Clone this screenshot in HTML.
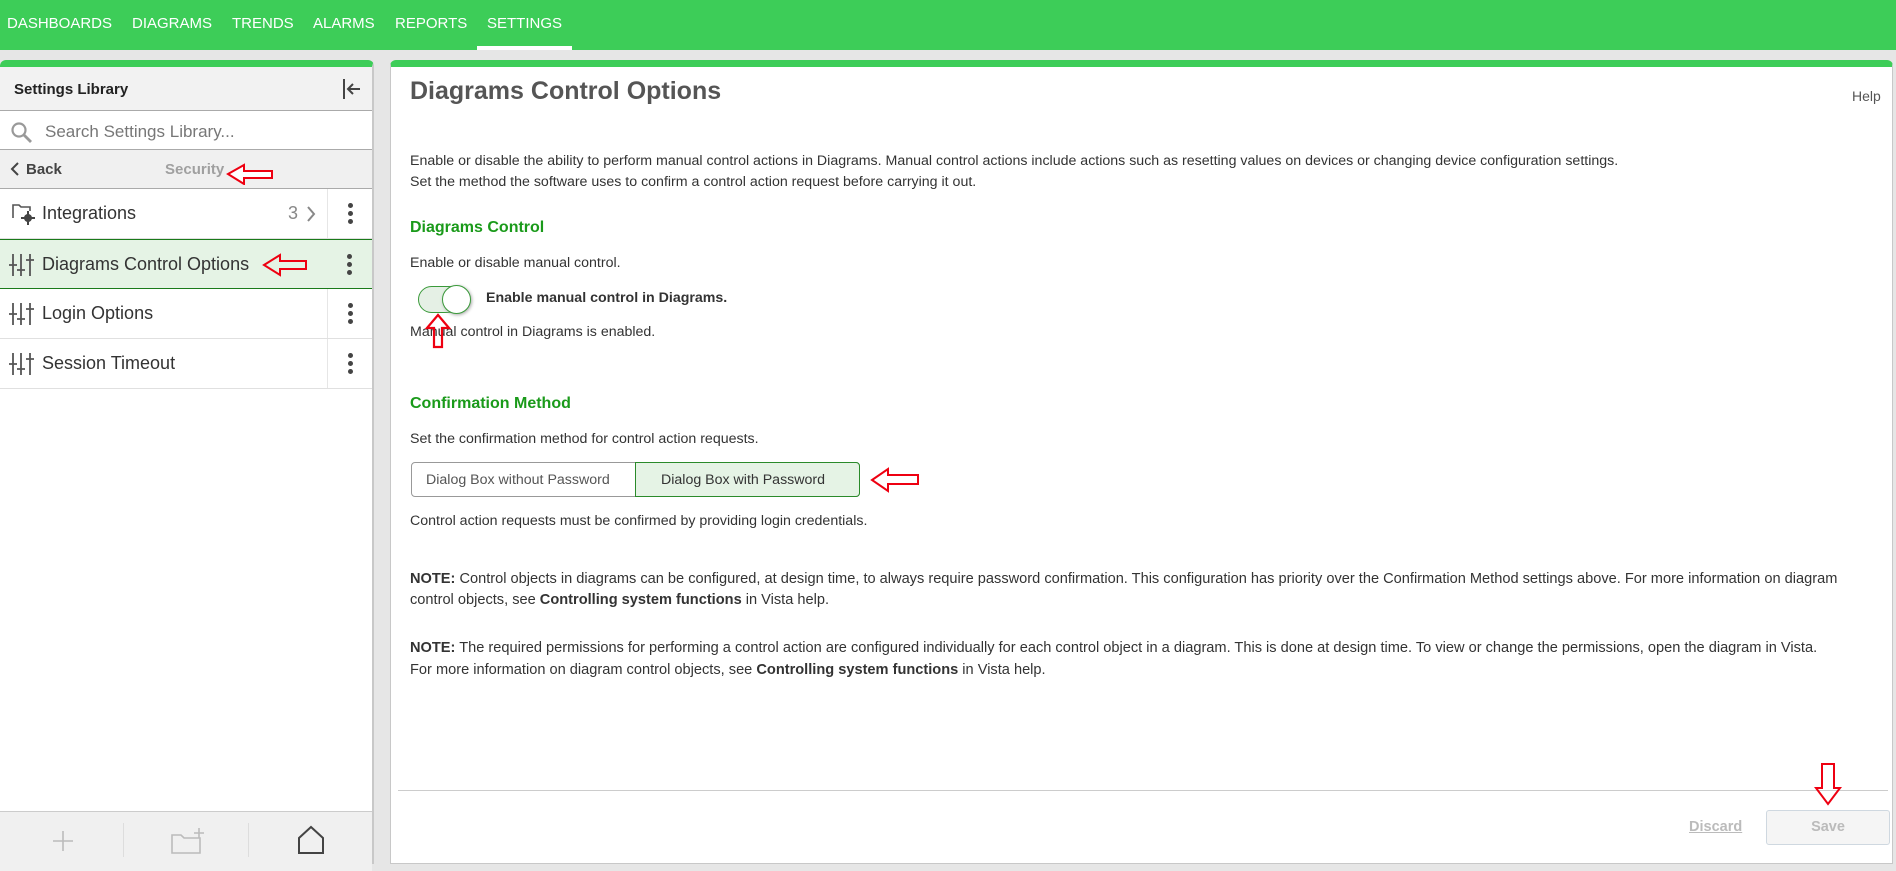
<!DOCTYPE html>
<html><head><meta charset="utf-8"><style>
*{box-sizing:border-box;margin:0;padding:0}
body{width:1896px;height:864px;background:#e6e6e6;font-family:"Liberation Sans",sans-serif;position:relative;overflow:hidden;color:#333}
.nav{position:absolute;left:0;top:0;width:1896px;height:50px;background:#3dcd58}
.nav span{position:absolute;top:15px;color:#fff;font-size:15px}
.a{position:absolute}
.left{position:absolute;left:0;top:60px;width:374px;height:804px;background:#fff;border-right:2px solid #c8c8c8;border-top:7px solid #3dcd58;border-radius:6px 6px 0 0}
.right{position:absolute;left:390px;top:60px;width:1503px;height:804px;background:#fff;border:1px solid #c8c8c8;border-top:7px solid #3dcd58;border-radius:6px 6px 0 0}
.item{position:absolute;left:0;width:372px;height:50px;border-bottom:1px solid #e0e0e0;font-size:18px;color:#333}
.item .t{position:absolute;left:42px;top:14px}
.item .dots{position:absolute;left:327px;top:0;width:45px;height:49px;border-left:1px solid #e6e6e6}
.item .dots i{position:absolute;left:20px;width:5px;height:5px;border-radius:50%;background:#444}
p.tx{position:absolute;left:410px;font-size:14.2px;color:#333;white-space:nowrap}
p.nt{font-size:14.6px}
h3{position:absolute;left:410px;font-size:16px;color:#1a9a1a;font-weight:bold}
</style></head><body>
<div class="nav">
<span style="left:7px">DASHBOARDS</span><span style="left:132px">DIAGRAMS</span><span style="left:232px">TRENDS</span><span style="left:313px">ALARMS</span><span style="left:395px">REPORTS</span><span style="left:487px">SETTINGS</span>
<div class="a" style="left:477px;top:46px;width:95px;height:4px;background:#fff"></div>
</div>

<div class="left">
<div class="a" style="left:0;top:0;width:372px;height:44px;background:#f2f2f2;border-bottom:1px solid #aaa"></div>
<div class="a" style="left:14px;top:14px;font-size:15px;font-weight:bold;color:#222">Settings Library</div>
<svg class="a" style="left:340px;top:10px" width="24" height="24" viewBox="0 0 24 24"><path d="M4 2v20M20 12H8M13 7l-5 5 5 5" stroke="#444" stroke-width="2" fill="none"/></svg>
<svg class="a" style="left:10px;top:54px" width="24" height="24" viewBox="0 0 24 24"><circle cx="9" cy="9" r="6.5" stroke="#999" stroke-width="2.2" fill="none"/><path d="M14 14l7 7" stroke="#999" stroke-width="2.8"/></svg>
<div class="a" style="left:45px;top:55px;font-size:17px;color:#777">Search Settings Library...</div>
<div class="a" style="left:0;top:82px;width:372px;height:40px;background:#f0f0f0;border-top:1px solid #aaa;border-bottom:1px solid #aaa"></div>
<svg class="a" style="left:9px;top:94px" width="12" height="16"><path d="M9 2L3 8l6 6" stroke="#444" stroke-width="2" fill="none"/></svg>
<div class="a" style="left:26px;top:94px;font-size:15px;font-weight:bold;color:#444">Back</div>
<div class="a" style="left:165px;top:94px;font-size:15px;font-weight:bold;color:#a0a0a0">Security</div>
<svg class="a" style="left:226px;top:96px" width="48" height="22"><path d="M2 11L18 2v6h28v7H18v6z" stroke="#e01" stroke-width="2" fill="#fff"/></svg>

<div class="item" style="top:122px"><svg class="a" style="left:11px;top:13px" width="26" height="24" viewBox="0 0 26 24"><path d="M2 16V3h6l2 2h9v4" stroke="#555" stroke-width="1.6" fill="none"/><circle cx="17" cy="16" r="4" fill="#444"/><circle cx="17" cy="16" r="1.5" fill="#fff"/><path d="M17 9v14M10 16h14" stroke="#444" stroke-width="2"/></svg><span class="t">Integrations</span><span class="a" style="left:288px;top:14px;color:#888;font-size:18px">3</span><svg class="a" style="left:305px;top:16px" width="12" height="18"><path d="M3 2l6 7-6 7" stroke="#888" stroke-width="2" fill="none"/></svg><div class="dots"><i style="top:14px"></i><i style="top:22px"></i><i style="top:30px"></i></div></div>
<div class="item" style="top:172px;background:#e5f3e5;border-top:1px solid #1a7a1a;border-bottom:1px solid #1a7a1a"><svg class="a" style="left:8px;top:13px" width="28" height="24" viewBox="0 0 28 24"><path d="M5 1v22M13 1v22M22 1v22M1 12h8M9 17h8M18 7h8" stroke="#555" stroke-width="1.8" fill="none"/></svg><span class="t">Diagrams Control Options</span><svg class="a" style="left:262px;top:13px" width="46" height="24"><path d="M2 12L18 2v6h26v8H18v6z" stroke="#e01" stroke-width="2" fill="none"/></svg><div class="dots" style="border-left:none"><i style="top:14px"></i><i style="top:22px"></i><i style="top:30px"></i></div></div>
<div class="item" style="top:222px"><svg class="a" style="left:8px;top:13px" width="28" height="24" viewBox="0 0 28 24"><path d="M5 1v22M13 1v22M22 1v22M1 12h8M9 17h8M18 7h8" stroke="#555" stroke-width="1.8" fill="none"/></svg><span class="t">Login Options</span><div class="dots"><i style="top:14px"></i><i style="top:22px"></i><i style="top:30px"></i></div></div>
<div class="item" style="top:272px"><svg class="a" style="left:8px;top:13px" width="28" height="24" viewBox="0 0 28 24"><path d="M5 1v22M13 1v22M22 1v22M1 12h8M9 17h8M18 7h8" stroke="#555" stroke-width="1.8" fill="none"/></svg><span class="t">Session Timeout</span><div class="dots"><i style="top:14px"></i><i style="top:22px"></i><i style="top:30px"></i></div></div>

<div class="a" style="left:0;top:744px;width:372px;height:60px;background:#f0f0f0;border-top:1px solid #ccc"></div>
<div class="a" style="left:123px;top:756px;width:1px;height:34px;background:#ddd"></div>
<div class="a" style="left:248px;top:756px;width:1px;height:34px;background:#ddd"></div>
<svg class="a" style="left:52px;top:763px" width="22" height="22"><path d="M11 1v20M1 11h20" stroke="#bbb" stroke-width="1.6"/></svg>
<svg class="a" style="left:170px;top:760px" width="38" height="28"><path d="M2 26V8h9l3 3h16v15z" stroke="#bbb" stroke-width="1.6" fill="none"/><path d="M29 1v10M24 6h10" stroke="#bbb" stroke-width="1.6"/></svg>
<svg class="a" style="left:296px;top:758px" width="30" height="30"><path d="M3 28V13L15 2l12 11v15z" stroke="#444" stroke-width="2" fill="none"/></svg>
</div>

<div class="right">
<div class="a" style="left:19px;top:10px;font-size:25px;font-weight:bold;color:#555">Diagrams Control Options</div>
<div class="a" style="left:1461px;top:21px;font-size:14px;color:#555">Help</div>
</div>
<p class="tx" style="top:153px">Enable or disable the ability to perform manual control actions in Diagrams. Manual control actions include actions such as resetting values on devices or changing device configuration settings.</p>
<p class="tx" style="top:174px">Set the method the software uses to confirm a control action request before carrying it out.</p>
<h3 style="top:219px">Diagrams Control</h3>
<p class="tx" style="top:255px">Enable or disable manual control.</p>
<div class="a" style="left:418px;top:286px;width:50px;height:27px;border:1.5px solid #3a9a3a;border-radius:14px;background:#e5f0e5"></div>
<div class="a" style="left:442px;top:285px;width:29px;height:29px;border:1.5px solid #3a9a3a;border-radius:50%;background:#fff;box-shadow:1px 1px 3px #aaa"></div>
<div class="a" style="left:486px;top:290px;font-size:14.2px;font-weight:bold;color:#333">Enable manual control in Diagrams.</div>
<p class="tx" style="top:324px">Manual control in Diagrams is enabled.</p>
<svg class="a" style="left:425px;top:313px" width="26" height="36"><path d="M13 2L2 15h7v19h8V15h7z" stroke="#e01" stroke-width="2.2" fill="none"/></svg>
<h3 style="top:395px">Confirmation Method</h3>
<p class="tx" style="top:431px">Set the confirmation method for control action requests.</p>
<div class="a" style="left:411px;top:462px;width:449px;height:35px;border:1px solid #999;border-radius:4px;background:#fff"></div>
<div class="a" style="left:426px;top:472px;font-size:14.2px;color:#555">Dialog Box without Password</div>
<div class="a" style="left:635px;top:462px;width:225px;height:35px;border:1px solid #2a8a2a;border-radius:0 4px 4px 0;background:#e5f3e5"></div>
<div class="a" style="left:661px;top:472px;font-size:14.2px;color:#333">Dialog Box with Password</div>
<svg class="a" style="left:870px;top:467px" width="50" height="26"><path d="M2 13L18 2v6h30v9H18v7z" stroke="#e01" stroke-width="2" fill="none"/></svg>
<p class="tx" style="top:513px">Control action requests must be confirmed by providing login credentials.</p>
<p class="tx nt" style="top:571px"><b>NOTE:</b> Control objects in diagrams can be configured, at design time, to always require password confirmation. This configuration has priority over the Confirmation Method settings above. For more information on diagram</p>
<p class="tx nt" style="top:592px">control objects, see <b>Controlling system functions</b> in Vista help.</p>
<p class="tx nt" style="top:640px"><b>NOTE:</b> The required permissions for performing a control action are configured individually for each control object in a diagram. This is done at design time. To view or change the permissions, open the diagram in Vista.</p>
<p class="tx nt" style="top:662px">For more information on diagram control objects, see <b>Controlling system functions</b> in Vista help.</p>
<div class="a" style="left:398px;top:790px;width:1490px;height:1px;background:#ccc"></div>
<div class="a" style="left:1689px;top:819px;font-size:14.5px;font-weight:bold;color:#bbb;text-decoration:underline">Discard</div>
<div class="a" style="left:1766px;top:810px;width:124px;height:35px;border:1px solid #cfd8e0;border-radius:3px;background:#f5f5f5;text-align:center;line-height:33px;font-size:14.5px;font-weight:bold;color:#bbb">Save</div>
<svg class="a" style="left:1814px;top:762px" width="28" height="44"><path d="M8 2h12v24h6L14 42 2 26h6z" stroke="#e01" stroke-width="2" fill="none"/></svg>
</body></html>
